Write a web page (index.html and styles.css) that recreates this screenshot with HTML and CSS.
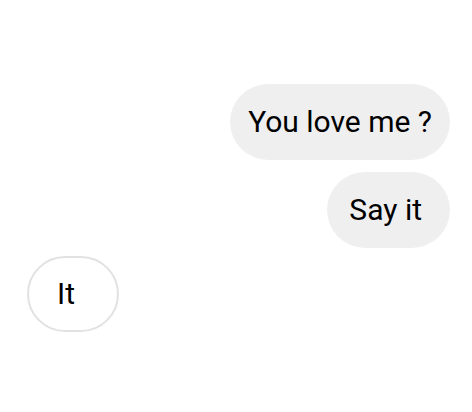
FILE: index.html
```html
<!DOCTYPE html>
<html>
<head>
<meta charset="utf-8">
<link rel="stylesheet" href="styles.css">
</head>
<body>
<div class="chat">
  <div class="bubble out first">You love me ?</div>
  <div class="bubble out second">Say it</div>
  <div class="bubble in">It</div>
</div>
</body>
</html>
```
FILE: styles.css
```css
html, body {
  margin: 0;
  padding: 0;
  background: #ffffff;
}
.chat {
  display: flex;
  flex-direction: column;
  padding: 84px 22px 0 27px;
  font-family: Roboto, "Liberation Sans", sans-serif;
}
.bubble {
  font-size: 30px;
  line-height: 36px;
  color: #000;
  border-radius: 38px;
  box-sizing: border-box;
  height: 76px;
  padding: 20px 18px;
}
.out {
  align-self: flex-end;
  background: #efefef;
}
.second {
  margin-top: 12px;
  padding: 20px 28px 20px 22px;
}
.in {
  align-self: flex-start;
  margin-top: 8px;
  border: 2px solid #e2e2e2;
  padding: 18px 42px 18px 28px;
}
```
